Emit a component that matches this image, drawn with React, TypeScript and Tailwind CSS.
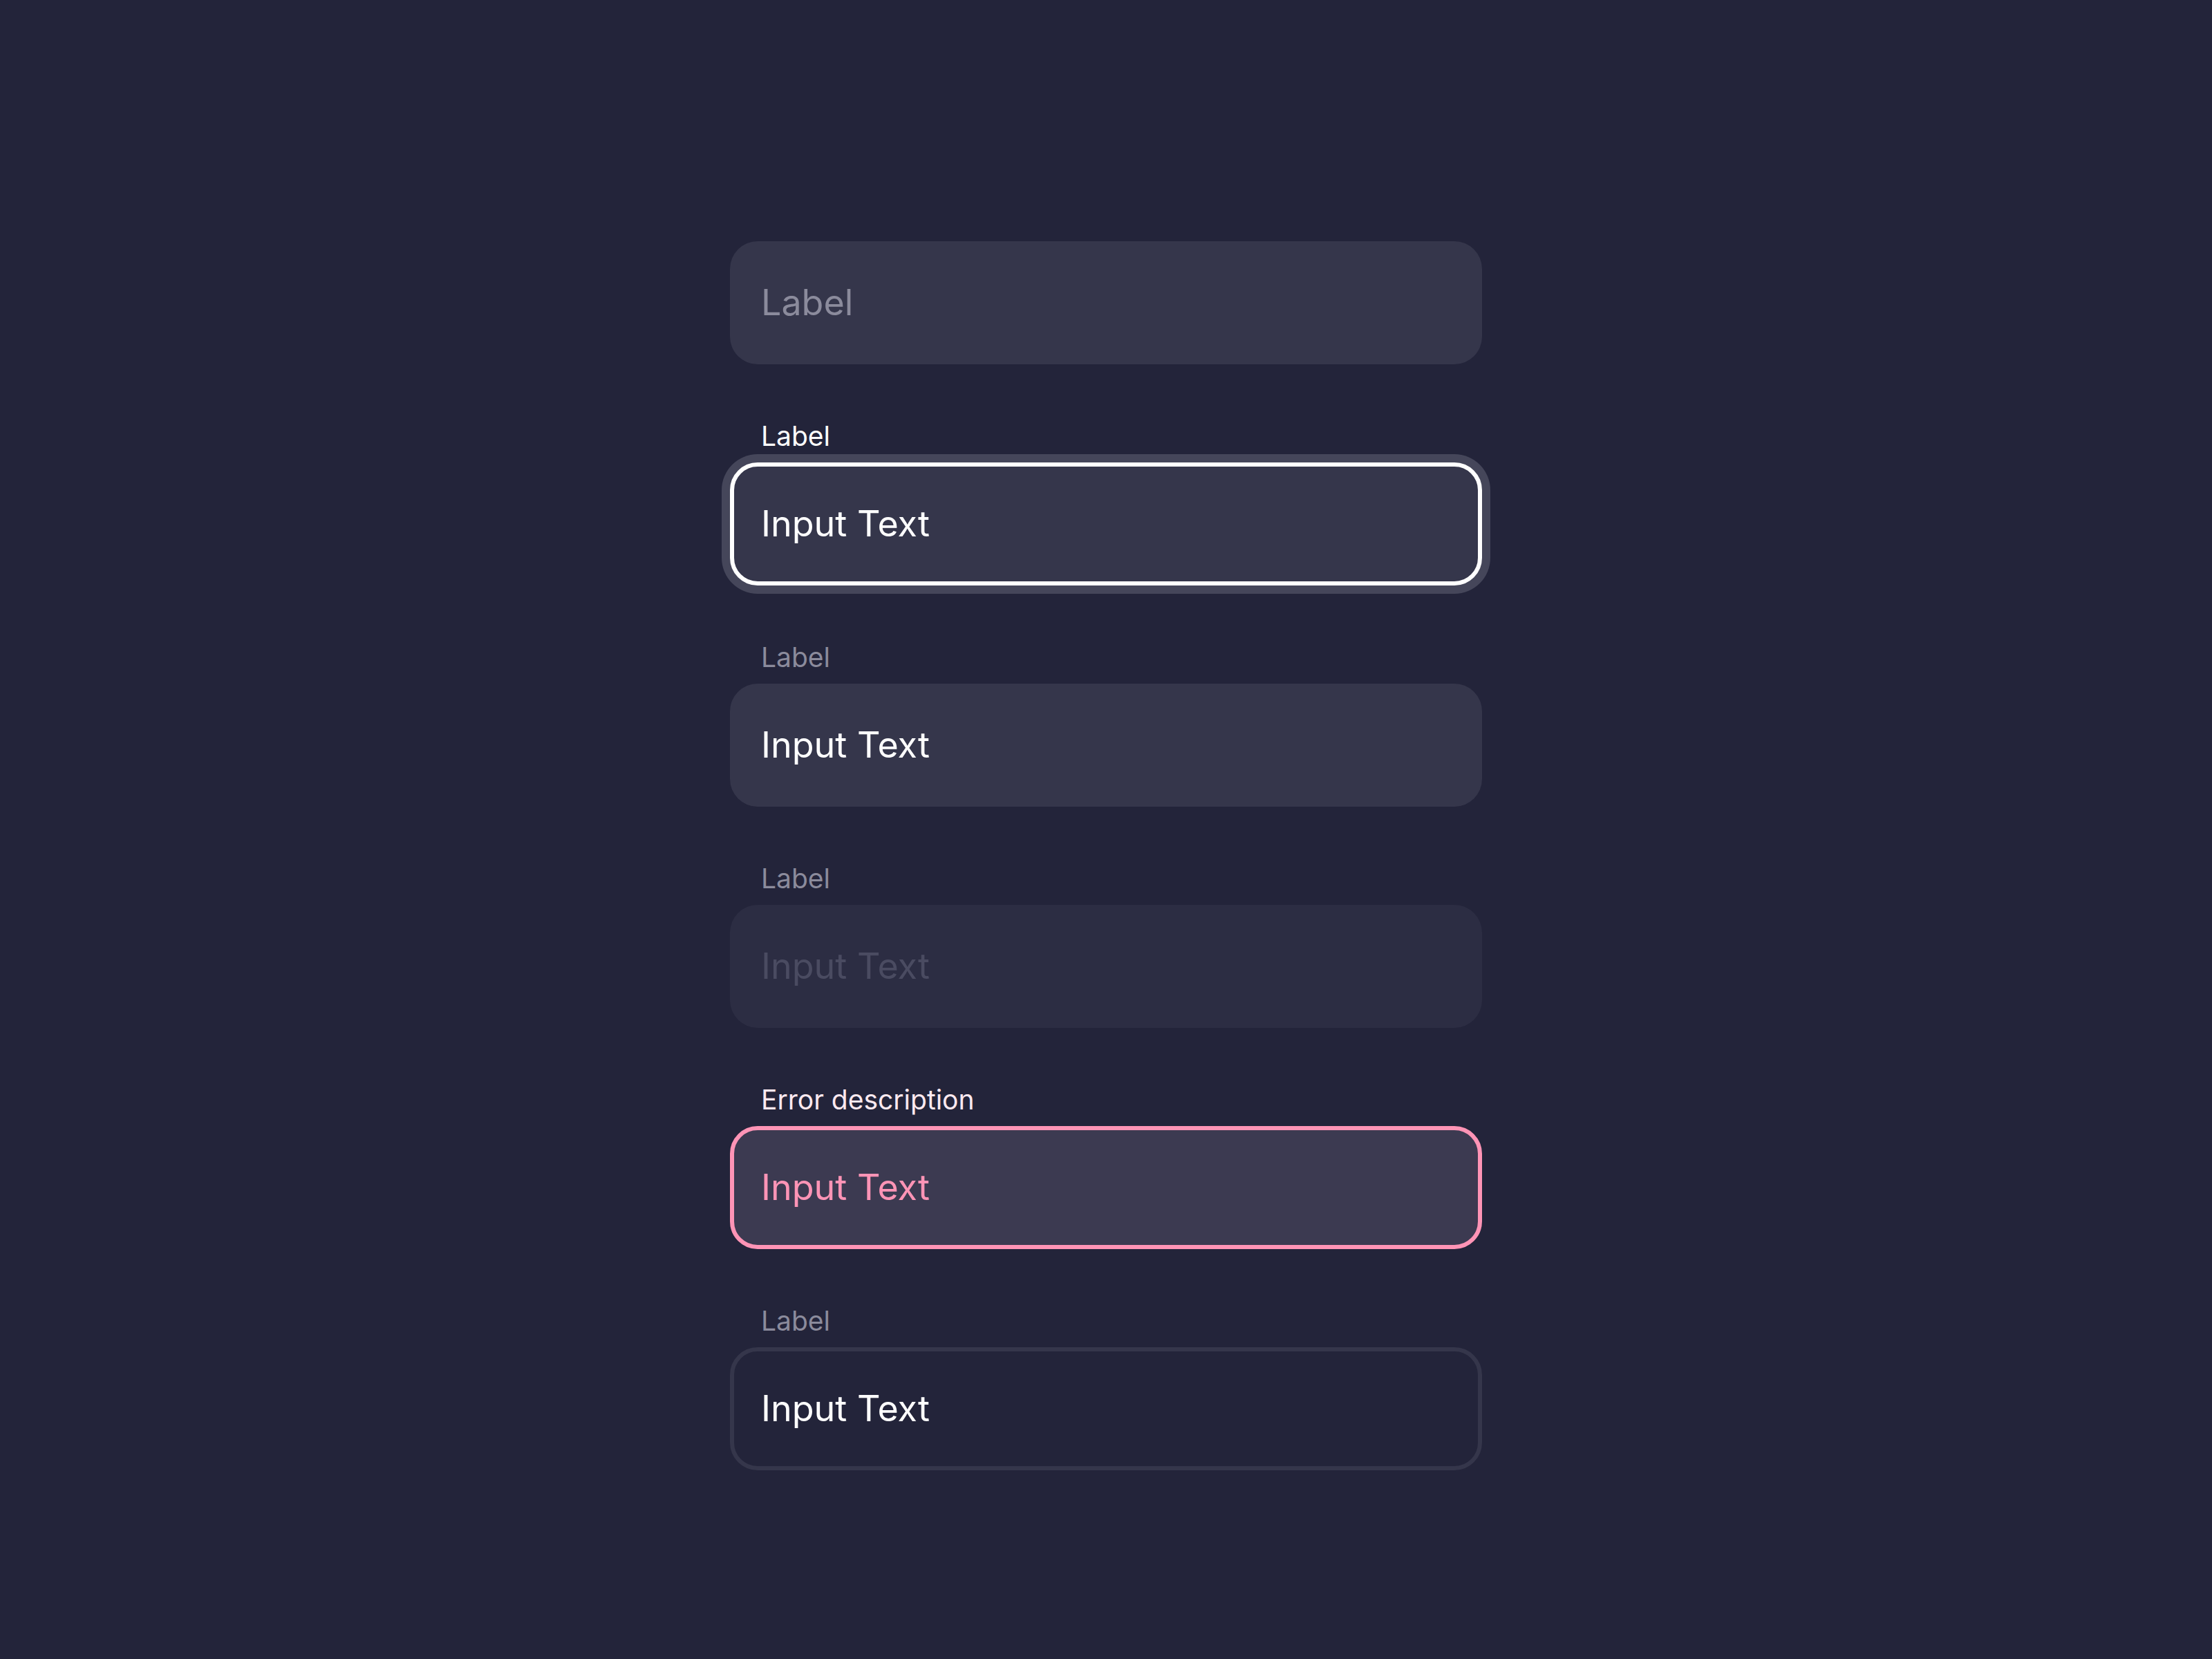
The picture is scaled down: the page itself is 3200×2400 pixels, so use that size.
import React from "react";

type FieldProps = {
  label?: string;
  labelClass?: string;
  boxClass: string;
  text: string;
  textClass: string;
};

const Field: React.FC<FieldProps> = ({ label, labelClass, boxClass, text, textClass }) => {
  return (
    <div className="flex flex-col">
      {label && (
        <div className={`pl-[45px] mb-[16px] text-[39px] leading-[44px] ${labelClass}`}>{label}</div>
      )}
      <div
        className={`h-[178px] w-full rounded-[40px] border-[6px] flex items-center px-[39px] ${boxClass}`}
      >
        <span className={`text-[52px] leading-none ${textClass}`}>{text}</span>
      </div>
    </div>
  );
};

const App: React.FC = () => {
  return (
    <div
      className="min-h-screen w-full bg-[#23243a] flex justify-center"
      style={{ fontFamily: "Inter, 'Noto Sans', sans-serif" }}
    >
      <div className="w-[1088px] pt-[349px] flex flex-col gap-[82px]">
        <Field boxClass="bg-[#35364b] border-transparent" text="Label" textClass="text-[#8b8b9c]" />

        <Field
          label="Label"
          labelClass="text-white"
          boxClass="bg-[#35364b] border-white shadow-[0_0_0_12px_#45465a]"
          text="Input Text"
          textClass="text-white"
        />

        <Field
          label="Label"
          labelClass="text-[#8b8b9c]"
          boxClass="bg-[#35364b] border-transparent"
          text="Input Text"
          textClass="text-white"
        />

        <Field
          label="Label"
          labelClass="text-[#8b8b9c]"
          boxClass="bg-[#2c2d43] border-transparent"
          text="Input Text"
          textClass="text-[#4a4b61]"
        />

        <Field
          label="Error description"
          labelClass="text-[#fde9f0]"
          boxClass="bg-[#3c3a51] border-[#ff94b6]"
          text="Input Text"
          textClass="text-[#ff94b6]"
        />

        <Field
          label="Label"
          labelClass="text-[#8b8b9c]"
          boxClass="border-[#35364b]"
          text="Input Text"
          textClass="text-white"
        />
      </div>
    </div>
  );
};

export default App;
